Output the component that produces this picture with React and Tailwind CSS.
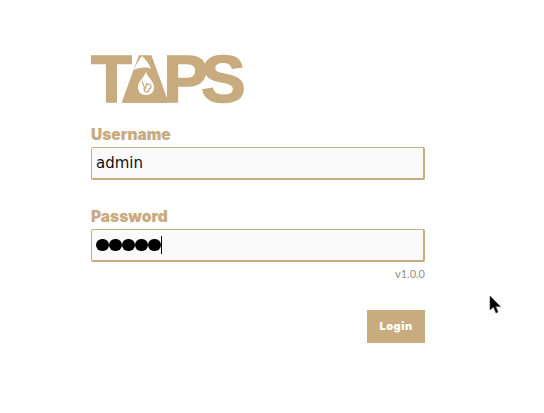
export default function App() {
  return (
    <div className="relative h-[413px] w-[544px] overflow-hidden bg-white font-['Inter',sans-serif]">
      <div className="ml-[91px] w-[334px] pt-[54px]">
        <div className="relative h-[49px] w-[152px]">
          <div className="h-[49px] whitespace-nowrap font-['Liberation_Sans',sans-serif] text-[67px] leading-[49px] font-bold text-[#c8ab7e] [-webkit-text-stroke:1.5px_#c8ab7e]">
            <span className="tracking-[-11px]">T</span>
            <span className="tracking-[-6px]">A</span>
            <span className="tracking-[-7px]">P</span>
            <span>S</span>
          </div>
          <svg className="absolute top-0 left-[38px] overflow-visible" width="40" height="49" viewBox="0 0 40 49">
            <path d="M17 3 L-4 49 L38 49 Z" fill="#c8ab7e" />
            <path d="M13 2 C16 5 20 9 22 15 C18 13 12 13 5 16 C7 10 10 6 13 2 Z" fill="#fff" />
            <path d="M17 18 C19 24 25 27 25 33 C25 38 22 41 17 41 C12 41 9 38 9 33 C9 27 15 24 17 18 Z" fill="#fff" />
            <path d="M13 27 L16 35 L18 29 M17 33 A2.5 2.5 0 1 0 20 35 A2.5 2.5 0 1 0 17 33" fill="none" stroke="#c8ab7e" strokeWidth="1.2" />
          </svg>
        </div>
        <label className="mt-[23px] block h-[20px] text-[15.5px] leading-[18px] font-black text-[#c8ab7e]">Username</label>
        <div className="mt-[1px] flex h-[33px] items-center rounded-[2px] border border-r-2 border-b-2 border-[#c8ab7e] bg-[#fafafa] px-[4px] font-['DejaVu_Sans',sans-serif] text-[15px] text-[#111]">admin</div>
        <label className="mt-[28px] block h-[20px] text-[15.5px] leading-[18px] font-black text-[#c8ab7e]">Password</label>
        <div className="mt-[1px] flex h-[33px] items-center rounded-[2px] border border-r-2 border-b-2 border-[#c8ab7e] bg-[#fafafa] px-[4px]">
          <span className="flex gap-[0.5px]">
            <span className="size-[12.5px] rounded-full bg-black" />
            <span className="size-[12.5px] rounded-full bg-black" />
            <span className="size-[12.5px] rounded-full bg-black" />
            <span className="size-[12.5px] rounded-full bg-black" />
            <span className="size-[12.5px] rounded-full bg-black" />
          </span>
          <span className="ml-[0.5px] h-[18px] w-px bg-black" />
        </div>
        <div className="mt-[5px] text-right font-['Lato',sans-serif] text-[11px] leading-[14px] text-[#8f8f8f]">v1.0.0</div>
        <div className="mt-[29px] flex justify-end">
          <button className="h-[33px] w-[58px] bg-[#c8ab7e] text-[11px] font-black tracking-[0.5px] text-white">Login</button>
        </div>
      </div>
      <svg className="absolute top-[295px] left-[489px]" width="13" height="20" viewBox="0 0 13 20">
        <path d="M1 1 L1 15 L4.5 12 L7 18 L9 17 L6.8 11.5 L11.5 11.5 Z" fill="#000" stroke="#444" strokeWidth="0.6" />
      </svg>
    </div>
  )
}
